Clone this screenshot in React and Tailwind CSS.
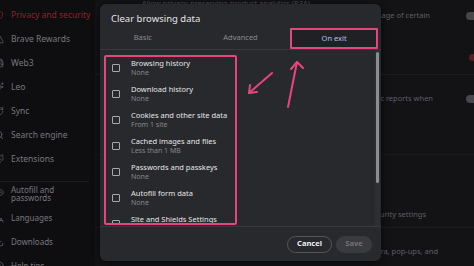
import React from "react";
import { Shield, Triangle, Wallet, Sparkles, RefreshCw, Search, Puzzle, KeyRound, Languages, Download, HelpCircle } from "lucide-react";

const side = [
  { t: "Privacy and security", I: Shield, active: true },
  { t: "Brave Rewards", I: Triangle },
  { t: "Web3", I: Wallet },
  { t: "Leo", I: Sparkles },
  { t: "Sync", I: RefreshCw },
  { t: "Search engine", I: Search },
  { t: "Extensions", I: Puzzle },
];
const side2 = [
  { t: ["Autofill and", "passwords"], I: KeyRound },
  { t: ["Languages"], I: Languages },
  { t: ["Downloads"], I: Download },
  { t: ["Help tips"], I: HelpCircle },
];

const items = [
  ["Browsing history", "None"],
  ["Download history", "None"],
  ["Cookies and other site data", "From 1 site"],
  ["Cached images and files", "Less than 1 MB"],
  ["Passwords and passkeys", "None"],
  ["Autofill form data", "None"],
  ["Site and Shields Settings", "None"],
];

function SideIcon({ I, active }) {
  return (
    <div className="w-[4px] h-[10px] overflow-hidden relative shrink-0">
      <I size={10} strokeWidth={2} className={"absolute right-0 top-0 " + (active ? "text-[#7f2228]" : "text-[#5e5e64]")} />
    </div>
  );
}

export default function App() {
  return (
    <div className="relative w-[474px] h-[266px] overflow-hidden bg-[#0e0e10] flex font-['Noto_Sans',sans-serif]">
      <aside className="w-[95px] shrink-0 pt-[3px] flex flex-col">
        {side.map(({ t, I, active }) => (
          <div key={t} className="h-[24px] flex items-center gap-[7px] shrink-0">
            <SideIcon I={I} active={active} />
            <span className={"text-[8.5px] leading-[10px] whitespace-nowrap " + (active ? "text-[#8a242b]" : "text-[#77777d]")}>{t}</span>
          </div>
        ))}
        <div className="h-[11px] shrink-0 border-b border-[#1c1c1f] mr-[6px]" />
        {side2.map(({ t, I }) => (
          <div key={t[0]} className="h-[24px] flex items-center gap-[7px] shrink-0">
            <SideIcon I={I} />
            <span className="text-[8px] leading-[8px] text-[#77777d] whitespace-nowrap">
              {t.map((l) => (
                <span key={l} className="block">{l}</span>
              ))}
            </span>
          </div>
        ))}
      </aside>

      <main className="flex-1 bg-[#131315] flex flex-col text-[7.5px] text-[#5f5f65]">
        <div className="h-[7px] shrink-0 flex justify-end pr-[164px] leading-[6px] text-[#4e4e53] whitespace-nowrap">Allow privacy-preserving product analytics (P3A)</div>
        <div className="h-[18px] shrink-0 flex items-center justify-between">
          <span className="flex-1 text-right pr-[36px] whitespace-nowrap">Enable usage of certain</span>
          <span className="w-[12px] h-[8px] rounded-full bg-[#48484c] mr-[-4px]" />
        </div>
        <div className="h-[50px] shrink-0 border-b border-[#1d1d20] flex justify-end">
          <span className="w-[7px] h-[7px] rounded-full bg-[#5c1c22] mt-[29px] mr-[-2px]" />
        </div>
        <div className="h-[47px] shrink-0 flex items-center justify-between">
          <span className="flex-1 text-right pr-[33px] whitespace-nowrap">Automatically send diagnostic reports when</span>
          <span className="w-[12px] h-[8px] rounded-full bg-[#48484c] mr-[-4px]" />
        </div>
        <div className="h-[33px] shrink-0 border-b border-[#1a1a1d]" />
        <div className="h-[73px] shrink-0 border-b border-[#1d1d20] flex items-end pb-[8px]">
          <span className="flex-1 text-right pr-[48px] leading-[10px] whitespace-nowrap">Safe Browsing and other security settings</span>
        </div>
        <div className="pt-[18px]">
          <div className="text-right pr-[36px] leading-[10px] whitespace-nowrap">Controls what sites can use and show (location, camera, pop-ups, and</div>
        </div>
      </main>

      {/* Dialog */}
      <div className="absolute left-[100px] top-[4px] w-[281px] h-[257px] rounded-[6px] bg-[#28292c] flex flex-col overflow-hidden shadow-[0_2px_8px_rgba(0,0,0,0.6)]">
        <div className="h-[23px] shrink-0 pl-[11px] pt-[9px] text-[9.5px] leading-[12px] text-[#e4e4e6]">Clear browsing data</div>
        <div className="h-[23px] shrink-0 grid grid-cols-3 border-b border-[#38393c] text-[7.5px]">
          <div className="flex items-center justify-center text-[#8a8a8f] pr-[8px]">Basic</div>
          <div className="flex items-center justify-center text-[#8a8a8f]">Advanced</div>
          <div className="flex items-stretch pl-[3px] pr-[3px] pt-[1px]">
            <div className="flex-1 flex items-center justify-center border-2 border-[#e8457c] bg-[#202124] text-[#a9c3f3] rounded-[1px]">On exit</div>
          </div>
        </div>
        <div className="relative h-[176px] shrink-0 overflow-hidden">
          <div className="absolute left-[275px] top-0 w-[5px] h-full bg-[#2e2f32]" />
          <div className="absolute left-[276px] top-[2px] w-[3px] h-[131px] rounded-full bg-[#8c8c90]" />
          <div className="ml-[4px] mt-[5px] w-[133px] h-[170px] border-2 border-[#e8457c] rounded-[2px] overflow-hidden">
            {items.map(([a, b]) => (
              <div key={a} className="h-[26px] flex items-start pl-[6px] pt-[1px]">
                <span className="w-[8px] h-[8px] mt-[5.5px] border-[1.5px] border-[#a9a9ad] rounded-[1px] shrink-0" />
                <div className="ml-[11px] flex flex-col">
                  <span className="text-[7.5px] leading-[10px] text-[#e6e6e8] whitespace-nowrap">{a}</span>
                  <span className="text-[7px] leading-[10px] text-[#86868b] whitespace-nowrap">{b}</span>
                </div>
              </div>
            ))}
          </div>
        </div>
        <div className="flex-1 border-t border-[#38393c] flex items-center justify-end gap-[4px] pr-[9px]">
          <button className="w-[45px] h-[17px] rounded-full border border-[#56575b] text-[7.5px] font-bold text-[#eeeeef] flex items-center justify-center">Cancel</button>
          <button className="w-[36px] h-[17px] rounded-full bg-[#3a3b3e] text-[7.5px] font-bold text-[#737378] flex items-center justify-center">Save</button>
        </div>
      </div>

      <svg className="absolute inset-0 pointer-events-none" width="474" height="266" viewBox="0 0 474 266">
        <g stroke="#e8457c" strokeWidth="2" strokeLinecap="round" fill="none">
          <path d="M272 73 L249 93" />
          <path d="M249 93 L250 85 M249 93 L257 92" />
          <path d="M288 107 L297 62" />
          <path d="M297 62 L291 69 M297 62 L303 68" />
        </g>
      </svg>
    </div>
  );
}
